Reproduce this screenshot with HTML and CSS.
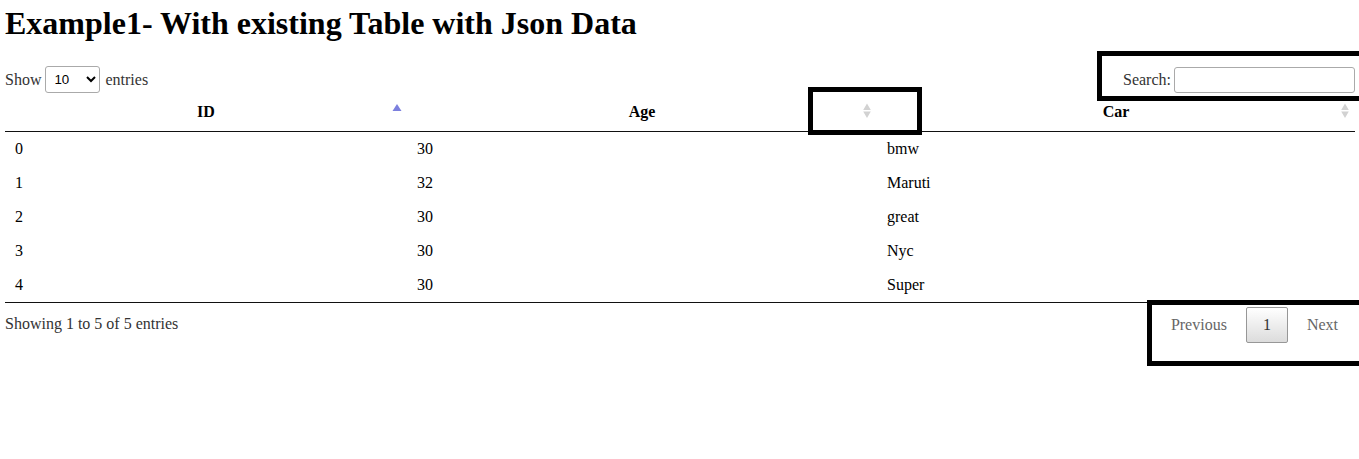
FILE: index.html
```html
<!DOCTYPE html>
<html>
<head>
<meta charset="utf-8">
<link rel="stylesheet" href="styles.css">
</head>
<body>
<h1 class="title">Example1- With existing Table with Json Data</h1>
<div class="wrapper">
  <div class="top">
    <label class="length">Show <select class="len-select"><option>10</option><option>25</option><option>50</option><option>100</option></select> entries</label>
    <label class="filter">Search:<input class="search" type="search"></label>
  </div>
  <table class="data">
    <thead>
      <tr>
        <th class="c1">ID<span class="sort"><svg width="10" height="16" viewBox="0 0 10 16"><path d="M5 1 L9.5 8 L0.5 8 Z" fill="#7c80de"/></svg></span></th>
        <th class="c2">Age<span class="sort"><svg width="10" height="16" viewBox="0 0 10 16"><path d="M5 0.5 L8.8 7 L1.2 7 Z M1.2 8.5 L8.8 8.5 L5 15 Z" fill="#d2d2d2"/></svg></span></th>
        <th class="c3">Car<span class="sort"><svg width="10" height="16" viewBox="0 0 10 16"><path d="M5 0.5 L8.8 7 L1.2 7 Z M1.2 8.5 L8.8 8.5 L5 15 Z" fill="#d2d2d2"/></svg></span></th>
      </tr>
    </thead>
    <tbody>
      <tr><td>0</td><td>30</td><td>bmw</td></tr>
      <tr><td>1</td><td>32</td><td>Maruti</td></tr>
      <tr><td>2</td><td>30</td><td>great</td></tr>
      <tr><td>3</td><td>30</td><td>Nyc</td></tr>
      <tr><td>4</td><td>30</td><td>Super</td></tr>
    </tbody>
  </table>
  <div class="bottom">
    <div class="info">Showing 1 to 5 of 5 entries</div>
    <div class="paginate">
      <a class="pbtn disabled">Previous</a>
      <a class="pbtn current">1</a>
      <a class="pbtn disabled">Next</a>
    </div>
  </div>
</div>
<div class="mark mark-search"></div>
<div class="mark mark-sort"></div>
<div class="mark mark-page"></div>
</body>
</html>
```

FILE: styles.css
```css
html { overflow: hidden; }
body {
  margin: 0;
  padding: 5px 4px 0 5px;
  font-family: "Liberation Serif", "Times New Roman", serif;
  font-size: 16px;
  color: #000;
  background: #fff;
}
.title {
  margin: 0;
  font-size: 32px;
  line-height: 37px;
  font-weight: bold;
}
.wrapper { color: #333; }
.top {
  display: flex;
  justify-content: space-between;
  align-items: center;
  margin-top: 24px;
  height: 27px;
}
.length, .filter {
  display: flex;
  align-items: center;
  color: #333;
}
.len-select {
  width: 55px;
  height: 27px;
  margin: 0 5px 0 4px;
  padding: 2px 4px;
  border: 1px solid #aaa;
  border-radius: 3px;
  background: #fff;
  font-family: "Liberation Sans", Arial, sans-serif;
  font-size: 13.33px;
  color: #000;
}
.search {
  width: 181px;
  height: 26px;
  box-sizing: border-box;
  margin-left: 3px;
  padding: 5px;
  border: 1px solid #aaa;
  border-radius: 3px;
  background: transparent;
  font-family: "Liberation Sans", Arial, sans-serif;
  font-size: 13.33px;
}
.data {
  width: 100%;
  border-collapse: separate;
  border-spacing: 0;
  color: #000;
}
.data th {
  position: relative;
  padding: 10px 18px;
  line-height: 18px;
  font-weight: bold;
  text-align: center;
  border-bottom: 1px solid #111;
}
.c1 { width: 366px; }
.c2 { width: 434px; }
.data td {
  padding: 8px 10px;
  line-height: 18px;
}
.data tbody tr:last-child td { border-bottom: 1px solid #111; }
.sort {
  position: absolute;
  right: 5px;
  top: 10px;
  display: block;
  line-height: 0;
}
.bottom {
  display: flex;
  justify-content: space-between;
  align-items: flex-start;
}
.info {
  padding-top: 12px;
  line-height: 18px;
  color: #333;
}
.paginate {
  display: flex;
  padding-top: 4px;
}
.pbtn {
  min-width: 8px;
  padding: 8px 16px;
  margin-left: 2px;
  border: 1px solid transparent;
  border-radius: 2px;
  line-height: 18px;
  text-align: center;
  color: #333;
}
.pbtn.disabled { color: #666; }
.pbtn.current {
  border-color: #979797;
  background: linear-gradient(to bottom, #fff 0%, #dcdcdc 100%);
  color: #333;
}
.mark {
  position: absolute;
  border: 5px solid #000;
  box-sizing: border-box;
}
.mark-search { left: 1097px; top: 51px; width: 280px; height: 50px; }
.mark-sort { left: 808px; top: 87px; width: 114px; height: 48px; }
.mark-page { left: 1147px; top: 300px; width: 230px; height: 66px; }
```
